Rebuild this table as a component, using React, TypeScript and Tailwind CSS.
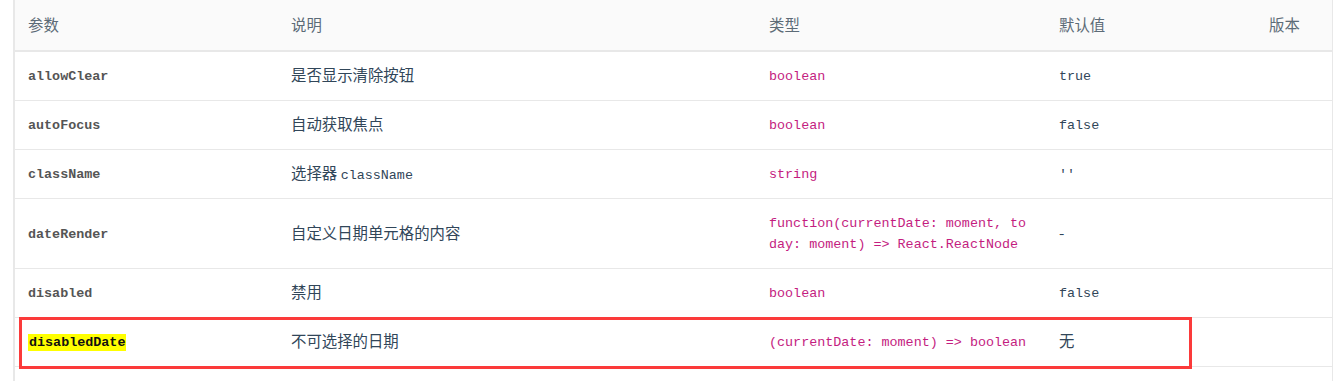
type Row = {
  name: string;
  desc: React.ReactNode;
  type: string;
  def: string;
  defMono?: boolean;
  mark?: boolean;
};

const monoFont = "font-['Liberation_Mono','DejaVu_Sans_Mono',monospace] text-[13.4px]";
const cjkFont = "font-['Noto_Sans_CJK_SC','Noto_Sans',sans-serif] text-[15.4px]";

const rows: Row[] = [
  { name: "allowClear", desc: "是否显示清除按钮", type: "boolean", def: "true", defMono: true },
  { name: "autoFocus", desc: "自动获取焦点", type: "boolean", def: "false", defMono: true },
  {
    name: "className",
    desc: (
      <>
        选择器 <span className={`${monoFont} leading-none`}>className</span>
      </>
    ),
    type: "string",
    def: "''",
    defMono: true,
  },
  {
    name: "dateRender",
    desc: "自定义日期单元格的内容",
    type: "function(currentDate: moment, today: moment) => React.ReactNode",
    def: "-",
  },
  { name: "disabled", desc: "禁用", type: "boolean", def: "false", defMono: true },
  {
    name: "disabledDate",
    desc: "不可选择的日期",
    type: "(currentDate: moment) => boolean",
    def: "无",
    mark: true,
  },
];

const heads = ["参数", "说明", "类型", "默认值", "版本"];

const cell = "border-b border-[#e8e8e8] px-[13px] pt-[14px] pb-[13px] align-middle leading-[21px]";
// 中文单元格：字体偏低，往上挪一点
const cjkCell = "border-b border-[#e8e8e8] px-[13px] pt-[12px] pb-[15px] align-middle leading-[21px]";

export default function App() {
  return (
    <div className="min-h-screen bg-white pl-[13px] text-[#314659]">
      <div className="relative w-[1320px]">
        <table className="w-full table-fixed border-separate border-spacing-0 border-l-2 border-r border-[#e8e8e8]">
          <colgroup>
            <col className="w-[263px]" />
            <col className="w-[478px]" />
            <col className="w-[290px]" />
            <col className="w-[210px]" />
            <col />
          </colgroup>
          <thead>
            <tr className="bg-[#fafafa]">
              {heads.map((h) => (
                <th
                  key={h}
                  className={`border-b-2 border-[#e8e8e8] px-[13px] pt-[14px] pb-[15px] text-left font-normal leading-[21px] text-[#5c6b77] ${cjkFont}`}
                >
                  {h}
                </th>
              ))}
            </tr>
          </thead>
          <tbody>
            {rows.map((r) => (
              <tr key={r.name}>
                <td className={`${cell} ${monoFont} font-bold`}>
                  <span className={r.mark ? "bg-[#ffff00] px-px py-px text-[#111]" : "text-[#555]"}>
                    {r.name}
                  </span>
                </td>
                <td className={`${cjkCell} ${cjkFont}`}>{r.desc}</td>
                <td className={`${cell} ${monoFont} break-all text-[#c41d7f]`}>{r.type}</td>
                <td className={r.defMono ? `${cell} ${monoFont}` : `${cjkCell} ${cjkFont}`}>{r.def}</td>
                <td className={cell}></td>
              </tr>
            ))}
            <tr>
              <td colSpan={5} className="h-[20px]"></td>
            </tr>
          </tbody>
        </table>
        {/* 标注框 */}
        <div className="pointer-events-none absolute left-[6px] top-[317px] h-[52px] w-[1173px] border-[3px] border-[#fb3a3a]" />
      </div>
    </div>
  );
}
